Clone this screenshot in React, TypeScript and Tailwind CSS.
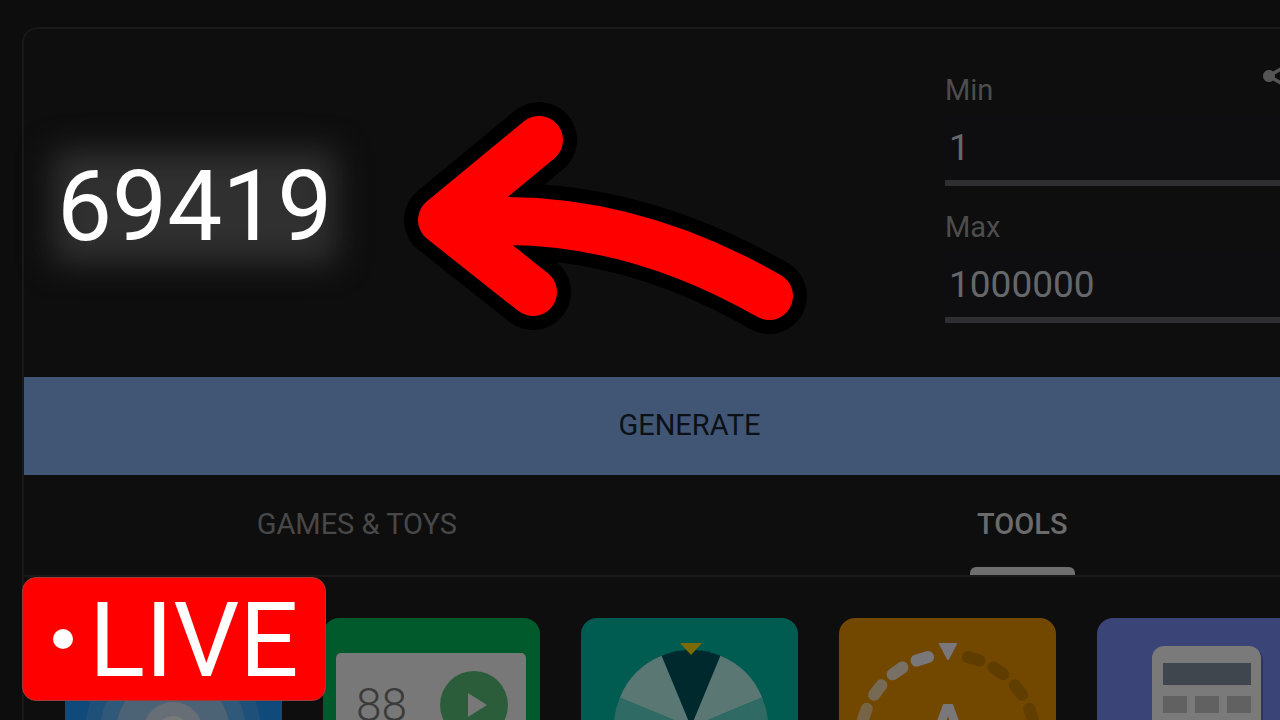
import type { ReactNode } from 'react'

interface FieldProps {
  id: string
  label: string
  value: string
}

interface Tile {
  name: string
  bg: string
  art: ReactNode
}

function Field({ id, label, value }: FieldProps) {
  return (
    <div>
      <label htmlFor={id} className="block pb-2 text-[29px] leading-[33px] text-[#4d4d4d]">{label}</label>
      <input
        id={id}
        type="text"
        defaultValue={value}
        className="block h-[71px] w-full border-b-[6px] border-[#2f2f31] bg-[#0e0e10] px-1 text-[37px] text-[#65686b] focus:outline-none"
      />
    </div>
  )
}

// wheel slices, 45 degrees each, the first one centred on the top
const slices = ['#00292d', '#5a7773', '#2f6b64', '#5a7773', '#2f6b64', '#5a7773', '#2f6b64', '#5a7773']

function slicePath(i: number) {
  const at = (deg: number) => {
    const a = (deg * Math.PI) / 180
    return `${110 + 77 * Math.sin(a)} ${109 - 77 * Math.cos(a)}`
  }
  return `M110 109 L${at(i * 45 - 22.5)} A77 77 0 0 1 ${at(i * 45 + 22.5)} Z`
}

// dashes of the spinner ring: angle from the top, colour
const dashes: [number, string][] = [
  [-17, '#79777a'], [-35, '#787065'], [-53, '#776a55'], [-71, '#776446'],
  [17, '#5f3c00'], [35, '#5f3c00'], [53, '#603d00'], [71, '#623e00'],
]

const tiles: Tile[] = [
  {
    name: 'Breathing',
    bg: 'bg-[#0f4a7a]',
    art: (
      <>
        <circle cx="108" cy="114" r="88" fill="#1f5079" />
        <circle cx="108" cy="114" r="73" fill="#305878" />
        <circle cx="108" cy="114" r="57" fill="#4c6275" />
        <circle cx="108" cy="114" r="30" fill="#686e75" />
        <circle cx="108" cy="114" r="16" fill="#77797b" />
      </>
    ),
  },
  {
    name: 'Timer',
    bg: 'bg-[#005a2c]',
    art: (
      <>
        <rect x="13" y="35" width="190" height="160" rx="5" fill="#787878" />
        <text x="33" y="103" fontSize="46" fontWeight="300" fill="#3b3b3b">88</text>
        <circle cx="151" cy="87" r="34" fill="#2c5d3a" />
        <path d="M145 75 L164 87 L145 99 Z" fill="#787878" />
      </>
    ),
  },
  {
    name: 'Spinner wheel',
    bg: 'bg-[#005c51]',
    art: (
      <>
        {slices.map((c, i) => <path key={i} d={slicePath(i)} fill={c} />)}
        <path d="M99 25 H121 L110 37 Z" fill="#7c6b05" />
      </>
    ),
  },
  {
    name: 'Letter picker',
    bg: 'bg-[#724800]',
    art: (
      <>
        {dashes.map(([deg, c]) => (
          <rect key={deg} x="97" y="31" width="24" height="12" rx="6" fill={c} transform={`rotate(${deg} 109 125)`} />
        ))}
        <path d="M101 26 H117 L109 41 Z" fill="#79777a" stroke="#79777a" strokeWidth="2" strokeLinejoin="round" />
        <text x="109" y="136" fontSize="70" fontWeight="700" textAnchor="middle" fill="#79777a">A</text>
      </>
    ),
  },
  {
    name: 'Calculator',
    bg: 'bg-[#3b4477]',
    art: (
      <>
        <rect x="57" y="30" width="109" height="170" rx="12" fill="#2c3464" />
        <rect x="55" y="28" width="109" height="170" rx="12" fill="#7a7a7a" />
        <rect x="66" y="45" width="88" height="22" fill="#40464e" />
        {[66, 98, 130].map(x => <rect key={x} x={x} y="78" width="24" height="17" fill="#616161" />)}
      </>
    ),
  },
]

function ShareIcon() {
  return (
    <svg viewBox="0 0 24 24" className="size-12" fill="#555555" aria-hidden="true">
      <path d="M18 16.08c-.76 0-1.44.3-1.96.77L8.91 12.7c.05-.23.09-.46.09-.7s-.04-.47-.09-.7l7.05-4.11c.54.5 1.25.81 2.04.81 1.66 0 3-1.34 3-3s-1.34-3-3-3-3 1.34-3 3c0 .24.04.47.09.7L8.04 9.81C7.5 9.31 6.79 9 6 9c-1.66 0-3 1.34-3 3s1.34 3 3 3c.79 0 1.5-.31 2.04-.81l7.12 4.16c-.05.21-.08.43-.08.65 0 1.61 1.31 2.92 2.92 2.92s2.92-1.31 2.92-2.92-1.31-2.92-2.92-2.92z" />
    </svg>
  )
}

function Arrow() {
  const d = 'M539 140 L442 220 L533 292 M456 223 Q482 221 508 221 Q640 222 769 296'
  return (
    <svg viewBox="400 96 412 242" className="pointer-events-none absolute top-[96px] left-[400px] w-[412px]" fill="none" strokeLinecap="round" strokeLinejoin="round" aria-hidden="true">
      <path d={d} stroke="#000000" strokeWidth="76" />
      <path d={d} stroke="#ff0000" strokeWidth="48" />
      <path d="M442 220 L504 198 L512 245 Z" fill="#ff0000" />
    </svg>
  )
}

export default function App() {
  return (
    <div className="relative h-screen overflow-hidden bg-[#0d0d0d] pt-[27px] pl-[22px] font-['Roboto',sans-serif]">
      {/* the card runs past the right edge of the window */}
      <main className="relative -mr-[77px] rounded-t-2xl border-2 border-[#191919] bg-[#0e0e0e]">
        <section className="flex h-[348px] items-center">
          <div className="flex-1 pt-2 pl-[33px]">
            <output className="relative inline-block text-[98px] leading-[112px] text-white">
              <span className="absolute -inset-x-1 inset-y-0 bg-[#303030] blur-lg" />
              <span className="relative">69419</span>
            </output>
          </div>
          <div className="mb-[10px] flex w-[410px] flex-col gap-[25px] pr-10">
            <Field id="min" label="Min" value="1" />
            <Field id="max" label="Max" value="1000000" />
          </div>
        </section>
        <button type="button" aria-label="Share" className="absolute top-[23px] right-[50px]">
          <ShareIcon />
        </button>

        <button type="button" className="block h-[98px] w-full bg-[#415674] text-[29px] text-[#0c1017]">GENERATE</button>

        <nav className="flex h-[102px] border-b-2 border-[#191919] text-[29px]">
          <button type="button" className="flex-1 text-[#484848]">GAMES &amp; TOYS</button>
          <button type="button" className="flex flex-1 flex-col items-center font-medium text-[#6b6b6b]">
            <span className="flex flex-1 items-center pt-2">TOOLS</span>
            <span className="h-2 w-[105px] rounded-t-md bg-[#6f6f6f]" />
          </button>
        </nav>

        <section className="grid grid-cols-5 gap-[41px] p-[41px]">
          {tiles.map(t => (
            <a key={t.name} href="#" aria-label={t.name} className={`block overflow-hidden rounded-2xl ${t.bg}`}>
              <svg viewBox="0 0 217 217" className="w-full" aria-hidden="true">{t.art}</svg>
            </a>
          ))}
        </section>
      </main>

      <Arrow />

      <div className="absolute top-[577px] left-[22px] flex h-[124px] w-[304px] items-center gap-4 rounded-[14px] border border-[#a33a3a] bg-[#ff0000] pl-[30px] text-[104px] leading-none text-white">
        <span className="size-5 shrink-0 rounded-full bg-white" />
        <span className="pt-1">LIVE</span>
      </div>
    </div>
  )
}
